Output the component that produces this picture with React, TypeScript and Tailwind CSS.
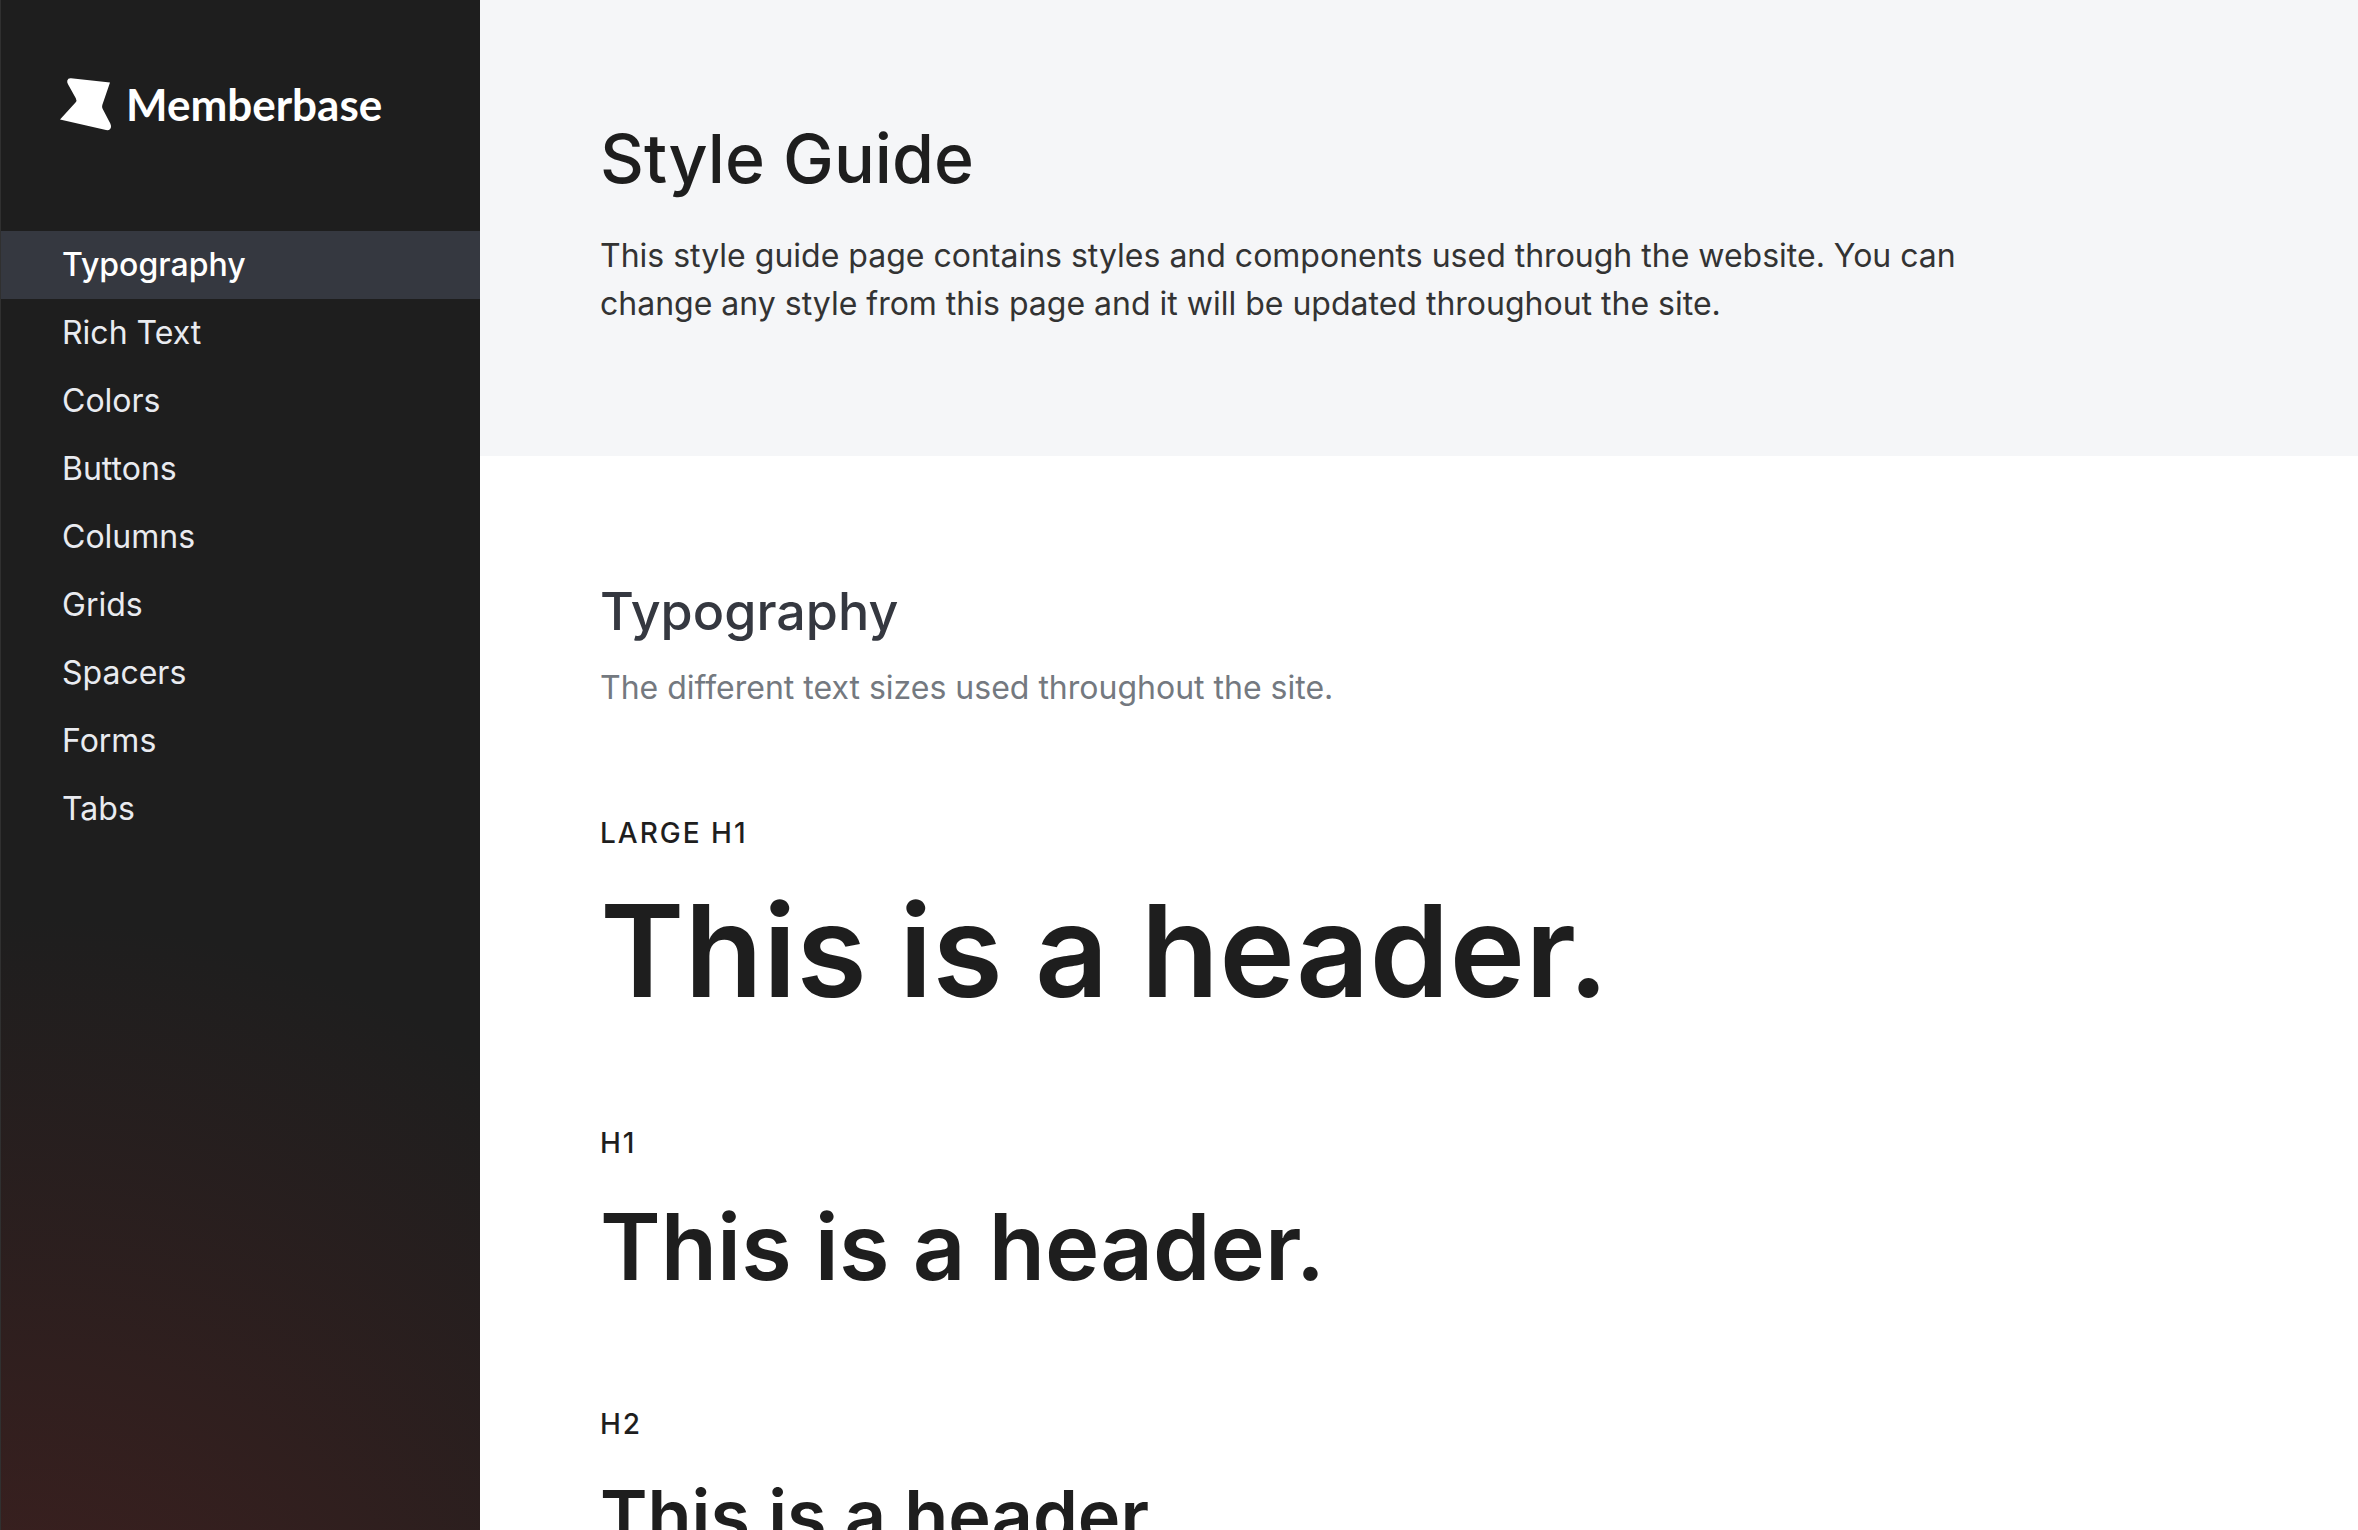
const links = ["Typography", "Rich Text", "Colors", "Buttons", "Columns", "Grids", "Spacers", "Forms", "Tabs"];

const samples = [
    { label: "Large H1", className: "text-[128px] leading-[154px]" },
    { label: "H1", className: "text-[92px] leading-[125px]" },
    { label: "H2", className: "text-[72px] leading-[102px]" },
];

function Logo() {
    return (
        <a href="#" className="flex items-start gap-[14px] px-[59px] text-white">
            <svg width="52" height="54" viewBox="0 0 52 54" fill="currentColor" aria-hidden="true">
                <path d="M11 0.3 L50 4.6 L42.3 27 Q41.7 29 42.6 30.8 L50.3 45.5 Q51.2 47.5 51 49 Q50.5 52.8 46 52 L0 41.5 L15.5 24.6 Q17.2 22.5 15.8 20.2 L8 6.2 Q6.8 4 7.3 2.4 Q8 0 11 0.3 Z" />
            </svg>
            <span className="font-['Lato',sans-serif] text-[44px] leading-[52px] font-bold">
                Memberbase
            </span>
        </a>
    );
}

export default function App() {
    return (
        <div className="flex h-screen overflow-hidden bg-white font-['Inter',sans-serif] text-[#1e1e1e]">
            <aside className="w-[480px] shrink-0 border-l border-[#303030] bg-[#1e1e1e] bg-[radial-gradient(circle_890px_at_0%_118%,#42201f_0%,#1e1e1e_100%)] pt-[78px]">
                <Logo />
                <nav className="mt-[99px] flex flex-col">
                    {links.map((link, i) => (
                        <a
                            key={link}
                            href="#"
                            className={
                                i === 0
                                    ? "bg-[#353840] px-[61px] text-[32px] leading-[68px] font-medium text-white"
                                    : "px-[61px] text-[32px] leading-[68px] text-[#e9ebf0]"
                            }
                        >
                            {link}
                        </a>
                    ))}
                </nav>
            </aside>
            <main className="min-w-0 flex-1">
                <header className="bg-[#f5f6f8] px-[120px] pt-[118px] pb-[128px]">
                    <h1 className="text-[68px] leading-[80px] font-medium">Style Guide</h1>
                    <p className="mt-[34px] max-w-[1400px] text-[32px] leading-[48px] text-[#333333]">
                        This style guide page contains styles and components used through the website. You can change
                        any style from this page and it will be updated throughout the site.
                    </p>
                </header>
                <section className="px-[120px] pt-[120px]">
                    <h2 className="text-[52px] leading-[72px] font-medium text-[#353840]">Typography</h2>
                    <p className="mt-4 mb-[104px] text-[32px] leading-[48px] text-[#747980]">
                        The different text sizes used throughout the site.
                    </p>
                    {samples.map((sample) => (
                        <div key={sample.label} className="mb-[98px]">
                            <p className="mb-6 text-[28px] leading-[34px] font-medium tracking-[2px] uppercase">
                                {sample.label}
                            </p>
                            <h3 className={`font-semibold ${sample.className}`}>This is a header.</h3>
                        </div>
                    ))}
                </section>
            </main>
        </div>
    );
}
